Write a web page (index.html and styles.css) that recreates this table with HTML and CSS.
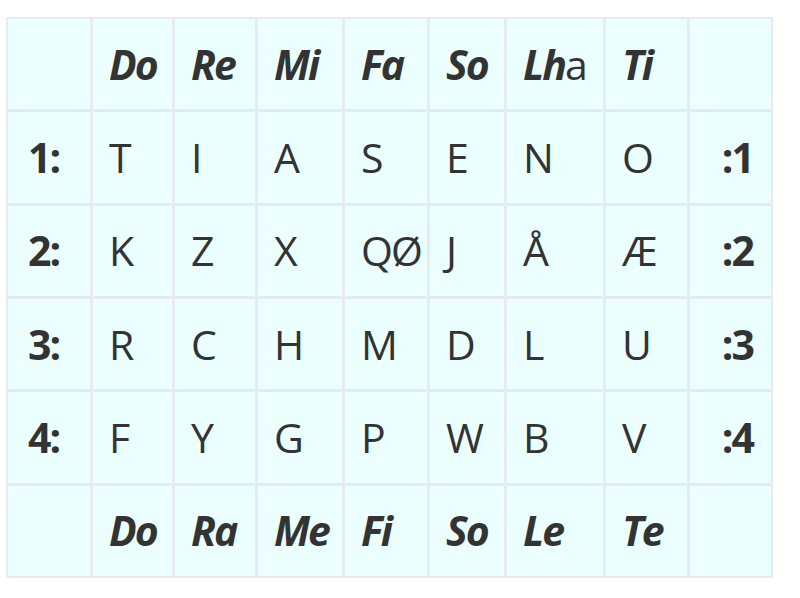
FILE: index.html
```html
<!DOCTYPE html>
<html lang="en">
<head>
    <meta charset="UTF-8">
    <meta name="viewport" content="width=device-width, initial-scale=1.0">
    <title>Solfège Alphabet</title>
    <link rel="stylesheet" href="styles.css">
</head>
<body>
    <table class="solfa">
        <colgroup>
            <col style="width: 85px">
            <col style="width: 82px">
            <col style="width: 83px">
            <col style="width: 87px">
            <col style="width: 85px">
            <col style="width: 77px">
            <col style="width: 99px">
            <col style="width: 84px">
            <col style="width: 81px">
        </colgroup>
        <tr class="solfa__notes">
            <td></td>
            <td><b><i>Do</i></b></td>
            <td><b><i>Re</i></b></td>
            <td><b><i>Mi</i></b></td>
            <td><b><i>Fa</i></b></td>
            <td><b><i>So</i></b></td>
            <td><b><i>Lh</i></b>a</td>
            <td><b><i>Ti</i></b></td>
            <td></td>
        </tr>
        <tr>
            <td class="solfa__num">1:</td>
            <td>T</td><td>I</td><td>A</td><td>S</td><td>E</td><td>N</td><td>O</td>
            <td class="solfa__num solfa__num--end">:1</td>
        </tr>
        <tr>
            <td class="solfa__num">2:</td>
            <td>K</td><td>Z</td><td>X</td><td>QØ</td><td>J</td><td>Å</td><td>Æ</td>
            <td class="solfa__num solfa__num--end">:2</td>
        </tr>
        <tr>
            <td class="solfa__num">3:</td>
            <td>R</td><td>C</td><td>H</td><td>M</td><td>D</td><td>L</td><td>U</td>
            <td class="solfa__num solfa__num--end">:3</td>
        </tr>
        <tr>
            <td class="solfa__num">4:</td>
            <td>F</td><td>Y</td><td>G</td><td>P</td><td>W</td><td>B</td><td>V</td>
            <td class="solfa__num solfa__num--end">:4</td>
        </tr>
        <tr class="solfa__notes">
            <td></td>
            <td><b><i>Do</i></b></td>
            <td><b><i>Ra</i></b></td>
            <td><b><i>Me</i></b></td>
            <td><b><i>Fi</i></b></td>
            <td><b><i>So</i></b></td>
            <td><b><i>Le</i></b></td>
            <td><b><i>Te</i></b></td>
            <td></td>
        </tr>
    </table>
</body>
</html>
```

FILE: styles.css
```css
body {
    margin: 17px 0 0 6px;
    background-color: #fff;
    font-family: "Open Sans", "DejaVu Sans", sans-serif;
    color: #333;
}

.solfa {
    width: 767px;
    table-layout: fixed;
    border-collapse: separate;
    border-spacing: 0;
    border: 2px solid #e6eaf3;
    background-color: #ebffff;
}

.solfa td {
    height: 90.33px;
    padding: 0 0 0 16px;
    border-right: 3px solid #e6eaf3;
    border-bottom: 3px solid #e6eaf3;
    font-size: 41px;
    font-weight: 500;
    letter-spacing: -2px;
    line-height: 1;
    vertical-align: middle;
    white-space: nowrap;
    overflow: hidden;
}

.solfa td b {
    font-weight: 700;
}

.solfa td:last-child {
    border-right: none;
}

.solfa tr:last-child td {
    border-bottom: none;
}

.solfa__num {
    font-weight: 700 !important;
    padding-left: 20px !important;
}

.solfa__num--end {
    text-align: right;
    padding: 0 18px 0 0 !important;
}
```
